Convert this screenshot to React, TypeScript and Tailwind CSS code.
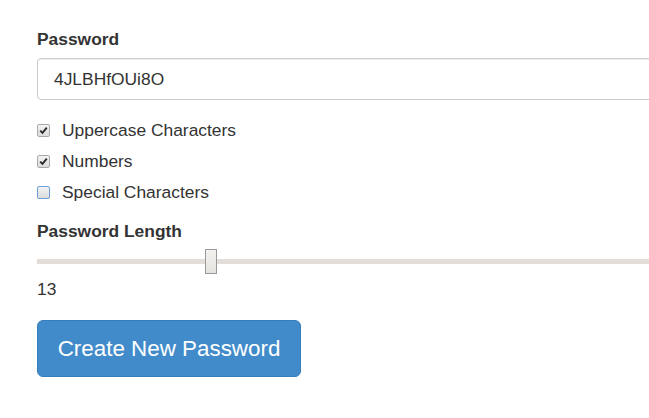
import React from 'react';

function Check({ checked, focused, label }: { checked?: boolean; focused?: boolean; label: string }) {
  return (
    <label className="flex items-center h-[31px]">
      <span
        className={
          'w-[13px] h-[13px] rounded-[2px] border flex items-center justify-center bg-gradient-to-b from-[#f3f3f3] to-[#dcdcdc] ' +
          (focused ? 'border-[#6f9fd8]' : 'border-[#a9a9a9]')
        }
      >
        {checked && (
          <svg width="9" height="9" viewBox="0 0 9 9">
            <path d="M1.2 4.6 L3.5 6.9 L7.8 1.6" fill="none" stroke="#2b2b2b" strokeWidth="1.9" />
          </svg>
        )}
      </span>
      <span className="ml-[12px] text-[17.4px] text-[#333]">{label}</span>
    </label>
  );
}

export default function App() {
  return (
    <div className="w-full min-h-screen bg-white overflow-hidden" style={{ fontFamily: '"Liberation Sans", Arial, sans-serif' }}>
      <div className="w-[760px] pl-[37px] pt-[28px] text-[#333]">
        <div className="text-[17.4px] font-bold leading-[22px] mb-[8px]">Password</div>
        <div className="h-[42px] border border-[#ccc] rounded-[4px] flex items-center px-[16px] text-[17.4px] shadow-[inset_0_1px_1px_rgba(0,0,0,0.075)]">
          4JLBHfOUi8O
        </div>
        <div className="mt-[15px] flex flex-col">
          <Check checked label="Uppercase Characters" />
          <Check checked label="Numbers" />
          <Check focused label="Special Characters" />
        </div>
        <div className="mt-[12px] text-[17.4px] font-bold leading-[22px]">Password Length</div>
        <div className="relative mt-[6px] h-[27px] flex items-center">
          <div className="w-full h-[5px] bg-[#e2ddd9]" />
          <div className="absolute left-[168px] top-[1px] w-[12px] h-[25px] border border-[#999] bg-gradient-to-b from-[#f2f1ef] to-[#e6e3df]" />
        </div>
        <div className="text-[17.4px] leading-[22px] mt-[3px]">13</div>
        <button className="mt-[20px] w-[264px] h-[57px] rounded-[6px] bg-[#428bca] border border-[#357ebd] text-white text-[22.4px] flex items-center justify-center">
          Create New Password
        </button>
      </div>
    </div>
  );
}
